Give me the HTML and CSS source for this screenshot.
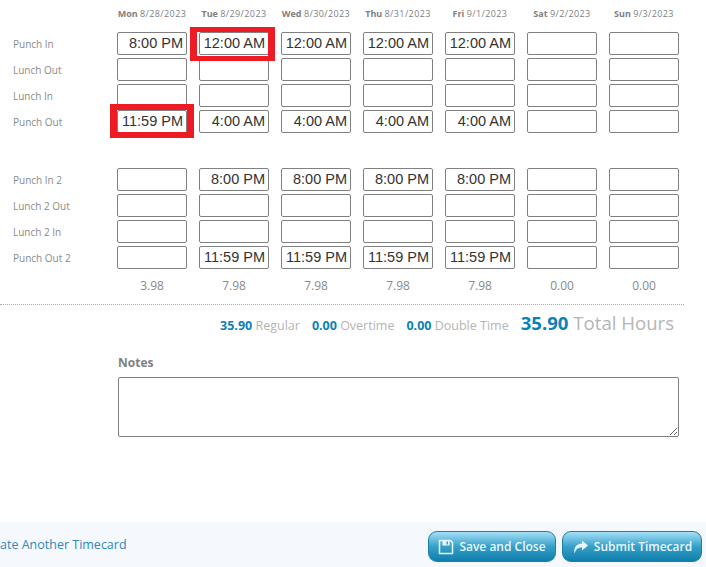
FILE: index.html
```html
<!DOCTYPE html>
<html lang="en">

<head>
    <meta charset="UTF-8">
    <title>Timecard</title>
    <link rel="stylesheet" href="styles.css">
</head>

<body>
    <div class="wrapper">
        <section class="days">
            <div></div>
            <div class="day">Mon <span>8/28/2023</span></div>
            <div class="day">Tue <span>8/29/2023</span></div>
            <div class="day">Wed <span>8/30/2023</span></div>
            <div class="day">Thu <span>8/31/2023</span></div>
            <div class="day">Fri <span>9/1/2023</span></div>
            <div class="day">Sat <span>9/2/2023</span></div>
            <div class="day">Sun <span>9/3/2023</span></div>
        </section>

        <section class="punches">
            <label>Punch In</label>
            <input value="8:00 PM">
            <div class="cell"><input value="12:00 AM"><span class="mark mark-tue"></span></div>
            <input value="12:00 AM">
            <input value="12:00 AM">
            <input value="12:00 AM">
            <input>
            <input>

            <label>Lunch Out</label>
            <input><input><input><input><input><input><input>

            <label>Lunch In</label>
            <input><input><input><input><input><input><input>

            <label>Punch Out</label>
            <div class="cell"><input value="11:59 PM"><span class="mark mark-mon"></span></div>
            <input value="4:00 AM">
            <input value="4:00 AM">
            <input value="4:00 AM">
            <input value="4:00 AM">
            <input>
            <input>
        </section>

        <section class="punches second">
            <label>Punch In 2</label>
            <input>
            <input value="8:00 PM">
            <input value="8:00 PM">
            <input value="8:00 PM">
            <input value="8:00 PM">
            <input>
            <input>

            <label>Lunch 2 Out</label>
            <input><input><input><input><input><input><input>

            <label>Lunch 2 In</label>
            <input><input><input><input><input><input><input>

            <label>Punch Out 2</label>
            <input>
            <input value="11:59 PM">
            <input value="11:59 PM">
            <input value="11:59 PM">
            <input value="11:59 PM">
            <input>
            <input>
        </section>

        <section class="totals">
            <div></div>
            <div>3.98</div>
            <div>7.98</div>
            <div>7.98</div>
            <div>7.98</div>
            <div>7.98</div>
            <div>0.00</div>
            <div>0.00</div>
        </section>

        <section class="summary">
            <p><b>35.90</b> Regular</p>
            <p><b>0.00</b> Overtime</p>
            <p><b>0.00</b> Double Time</p>
            <p class="total"><b>35.90</b> Total Hours</p>
        </section>

        <section class="notes">
            <h2>Notes</h2>
            <textarea></textarea>
        </section>

        <footer>
            <a href="#">Create Another Timecard</a>
            <div class="buttons">
                <button class="save">
                    <svg width="16" height="16" viewBox="0 0 16 16">
                        <path d="M1.5 1.500h11l2 2v11h-13z" fill="none" stroke="#e6f6fd" stroke-width="1.5" stroke-linejoin="round"/>
                        <path d="M4.500 1.500h7v5h-7z" fill="#e6f6fd"/>
                        <path d="M8.500 2.500h1.500v3h-1.500z" fill="#3f9fc6"/>
                    </svg>
                    Save and Close
                </button>
                <button class="submit">
                    <svg width="17" height="16" viewBox="0 0 17 16">
                        <path d="M10 1.500l6 5-6 5v-3c-4 0-6 1.500-7.500 6C1.500 9 4 4.800 10 4.500z" fill="#e6f6fd"/>
                    </svg>
                    Submit Timecard
                </button>
            </div>
        </footer>
    </div>
</body></html>
```

FILE: styles.css
```css
* {
    margin: 0;
    box-sizing: border-box;
}

body {
    background: #fff;
}

.wrapper {
    font-family: "Open Sans", sans-serif;
    width: 706px;
    height: 567px;
    overflow: hidden;
    display: flex;
    flex-direction: column;
}

.days,
.punches,
.totals {
    display: grid;
    grid-template-columns: 105px repeat(7, 70px);
    column-gap: 12px;
}

.days {
    padding-top: 8px;
    height: 32px;
}

.day {
    font-size: 9px;
    font-weight: 700;
    line-height: 12px;
    color: #808080;
    text-align: center;
    white-space: nowrap;
}

.day span {
    font-weight: 400;
    letter-spacing: 0.4px;
}

.punches {
    grid-auto-rows: 23px;
    row-gap: 3px;
}

.second {
    margin-top: 35px;
}

label {
    font-size: 10px;
    line-height: 25px;
    padding-left: 13px;
    color: #8a8a8a;
}

input {
    display: block;
    width: 70px;
    height: 23px;
    border: 1px solid #808080;
    border-radius: 2px;
    background: #fff;
    padding: 0 3px 1px 0;
    font-family: "Liberation Sans", sans-serif;
    font-size: 14.5px;
    color: #333;
    text-align: right;
}

.cell {
    position: relative;
    height: 23px;
}

.mark {
    position: absolute;
    border: 7px solid #ed1c24;
}

.mark-tue {
    left: -9px;
    top: -5px;
    width: 85px;
    height: 34px;
    border-width: 5px 7px;
}

.mark-mon {
    left: -7px;
    top: -6px;
    width: 84px;
    height: 34px;
    border-width: 6px 7px;
}

.totals {
    margin-top: 9px;
    font-size: 12px;
    line-height: 16px;
    color: #8a8a8a;
    text-align: center;
}

.summary {
    margin-top: 10px;
    width: 684px;
    border-top: 1px dotted #aaa;
    height: 36px;
    padding: 5px 10px 0 0;
    display: flex;
    justify-content: flex-end;
    align-items: baseline;
    column-gap: 12px;
    font-size: 12.5px;
    color: #b5b5b5;
}

.summary b {
    color: #0b82b5;
}

.total {
    font-size: 18.6px;
}

.notes {
    margin-top: 15px;
    padding-left: 118px;
}

.notes h2 {
    font-size: 12px;
    line-height: 16px;
    font-weight: 700;
    color: #808080;
    margin-bottom: 6px;
}

textarea {
    display: block;
    width: 561px;
    height: 60px;
    border: 1px solid #808080;
    border-radius: 2px;
    background: #fff;
}

footer {
    margin-top: auto;
    height: 45px;
    background: #f5f8fc;
    display: flex;
    justify-content: space-between;
    padding: 9px 4px 0 0;
}

footer a {
    margin-left: -20px;
    font-size: 12.5px;
    line-height: 28px;
    color: #2f88bd;
    text-decoration: none;
}

.buttons {
    display: flex;
    column-gap: 6px;
}

button {
    height: 31px;
    border: 1px solid #1b80a8;
    border-radius: 9px;
    background: linear-gradient(#a4e0f8, #38a0c8 50%, #0e7fab);
    color: #eaf8fe;
    font-family: "Open Sans", sans-serif;
    font-size: 12px;
    font-weight: 600;
    display: flex;
    align-items: center;
    justify-content: center;
    column-gap: 5px;
    padding: 0;
}

.save {
    width: 128px;
}

.submit {
    width: 140px;
}
```
